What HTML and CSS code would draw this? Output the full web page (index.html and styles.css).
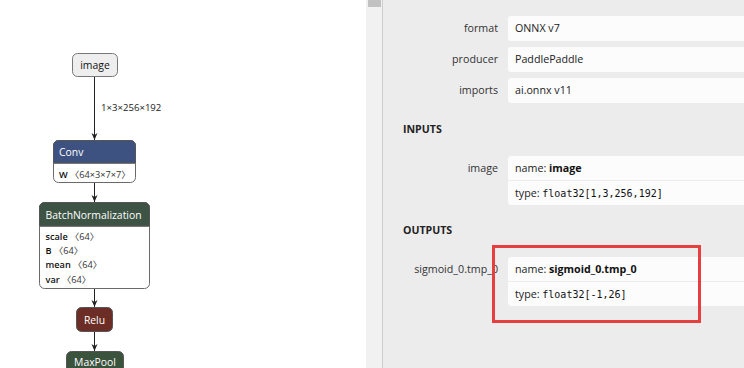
FILE: index.html
```html
<!DOCTYPE html>
<html>
<head>
<meta charset="utf-8">
<link rel="stylesheet" href="styles.css">
</head>
<body>
<div class="app">
  <div class="canvas">
    <svg class="graph" width="366" height="368" viewBox="0 0 366 368">
      <defs>
        <marker id="arrow" markerWidth="8" markerHeight="8" refX="7" refY="4" orient="auto" markerUnits="userSpaceOnUse">
          <path d="M0,1 L7,4 L0,7 L2,4 Z" fill="#222"/>
        </marker>
      </defs>
      <g class="edges">
        <line x1="94.5" y1="77" x2="94.5" y2="140" marker-end="url(#arrow)"/>
        <line x1="94.5" y1="183" x2="94.5" y2="202" marker-end="url(#arrow)"/>
        <line x1="94.5" y1="289" x2="94.5" y2="307" marker-end="url(#arrow)"/>
        <line x1="94.5" y1="332" x2="94.5" y2="351" marker-end="url(#arrow)"/>
      </g>
      <text class="edge-label" x="101" y="111">1×3×256×192</text>

      <g class="node">
        <rect class="input-node" x="72.5" y="53.5" width="45" height="23" rx="5"/>
        <text class="dark" x="95" y="69" text-anchor="middle">image</text>
      </g>

      <g class="node">
        <rect class="body" x="53.5" y="140.5" width="82" height="42" rx="5"/>
        <path class="conv" d="M53.5,163 V145.5 a5,5 0 0 1 5,-5 H130.5 a5,5 0 0 1 5,5 V163 Z"/>
        <line class="sep" x1="53.5" y1="163.5" x2="135.5" y2="163.5"/>
        <text class="light" x="59" y="156">Conv</text>
        <text class="attr" x="59" y="178"><tspan class="b">W</tspan> 〈64×3×7×7〉</text>
      </g>

      <g class="node">
        <rect class="body" x="39.5" y="202.5" width="110" height="86" rx="5"/>
        <path class="norm" d="M39.5,226 V207.5 a5,5 0 0 1 5,-5 H144.5 a5,5 0 0 1 5,5 V226 Z"/>
        <line class="sep" x1="39.5" y1="226.5" x2="149.5" y2="226.5"/>
        <text class="light" x="45.5" y="219">BatchNormalization</text>
        <text class="attr" x="45.5" y="240"><tspan class="b">scale</tspan> 〈64〉</text>
        <text class="attr" x="45.5" y="254"><tspan class="b">B</tspan> 〈64〉</text>
        <text class="attr" x="45.5" y="268"><tspan class="b">mean</tspan> 〈64〉</text>
        <text class="attr" x="45.5" y="283"><tspan class="b">var</tspan> 〈64〉</text>
      </g>

      <g class="node">
        <rect class="act" x="76.5" y="307.5" width="36" height="24" rx="5"/>
        <text class="light" x="94.5" y="323.5" text-anchor="middle">Relu</text>
      </g>

      <g class="node">
        <rect class="pool" x="66.5" y="351.5" width="57" height="30" rx="5"/>
        <text class="light" x="95" y="366" text-anchor="middle">MaxPool</text>
      </g>
    </svg>
  </div>

  <div class="sidebar">
    <div class="scrollbar"><div class="thumb"></div></div>
    <div class="content">
      <div class="rows">
        <div class="row"><div class="label">format</div><div class="value">ONNX v7</div></div>
        <div class="row"><div class="label">producer</div><div class="value">PaddlePaddle</div></div>
        <div class="row"><div class="label">imports</div><div class="value">ai.onnx v11</div></div>
      </div>

      <div class="header">INPUTS</div>
      <div class="row">
        <div class="label">image</div>
        <div class="value multi">
          <div class="line">name: <b>image</b></div>
          <div class="line">type: <code>float32[1,3,256,192]</code></div>
        </div>
      </div>

      <div class="header">OUTPUTS</div>
      <div class="row">
        <div class="label">sigmoid_0.tmp_0</div>
        <div class="value multi">
          <div class="line">name: <b>sigmoid_0.tmp_0</b></div>
          <div class="line">type: <code>float32[-1,26]</code></div>
        </div>
      </div>
    </div>
    <div class="highlight"></div>
  </div>
</div>
</body>
</html>
```

FILE: styles.css
```css
* { box-sizing: border-box; }
html, body { margin: 0; padding: 0; }
body {
  width: 744px;
  height: 368px;
  overflow: hidden;
  font-family: "Open Sans", "Noto Sans", sans-serif;
  background: #fff;
}
.app {
  display: flex;
  width: 744px;
  height: 368px;
}
.canvas {
  width: 366px;
  height: 368px;
  background: #fff;
  flex: none;
}
.graph { display: block; }
.edges line { stroke: #222; stroke-width: 1; }
.edge-label {
  font-family: "Open Sans", sans-serif;
  font-size: 9.6px;
  fill: #222;
}
.node text {
  font-family: "Open Sans", "Noto Sans CJK SC", sans-serif;
  font-size: 10.4px;
}
.node .dark { fill: #111; }
.node .light { fill: #fff; }
.input-node { fill: #eeeeee; stroke: #777; stroke-width: 1; }
.body { fill: #fff; stroke: #6a6a6a; stroke-width: 1; }
.conv { fill: #3e5282; stroke: #555; stroke-width: 1; }
.norm { fill: #3d5444; stroke: #555; stroke-width: 1; }
.act { fill: #6b2d25; stroke: #555; stroke-width: 1; }
.pool { fill: #3b523d; stroke: #555; stroke-width: 1; }
.sep { stroke: #777; stroke-width: 1; }
.node .attr { font-size: 9.2px; fill: #333; }
.node .attr .b { font-weight: 600; fill: #111; }

.sidebar {
  position: relative;
  flex: 1;
  display: flex;
  background: #ececec;
  overflow: hidden;
}
.scrollbar {
  width: 17px;
  flex: none;
  background: #f1f1f1;
  border-right: 1px solid #cdcdcd;
  padding-left: 2px;
}
.thumb {
  width: 13px;
  height: 7px;
  background: #c1c1c1;
}
.content {
  flex: 1;
  padding: 16px 0 0 20px;
  font-size: 10.7px;
  color: #333;
  margin-right: -10px;
}
.rows {
  display: flex;
  flex-direction: column;
  gap: 6px;
}
.row {
  display: flex;
  align-items: flex-start;
}
.label {
  width: 95px;
  flex: none;
  text-align: right;
  height: 25px;
  line-height: 25px;
  white-space: nowrap;
  color: #333;
}
.value {
  flex: 1;
  margin-left: 10px;
  background: #fcfcfc;
  border-radius: 3px;
  height: 25px;
  line-height: 25px;
  padding-left: 7px;
  color: #222;
}
.value.multi {
  height: auto;
  padding-left: 0;
}
.line {
  height: 24px;
  line-height: 24px;
  padding-left: 7px;
}
.line + .line {
  height: 25px;
  border-top: 1px solid #ececec;
}
.line b { font-weight: 700; color: #111; }
code {
  font-family: "DejaVu Sans Mono", monospace;
  font-size: 10px;
  color: #111;
}
.header {
  font-weight: 700;
  font-size: 10.6px;
  color: #222;
  height: 20px;
  line-height: 20px;
  margin: 16px 0 17px 0;
}
.row + .header { margin-top: 15px; }
.highlight {
  position: absolute;
  left: 126px;
  top: 245px;
  width: 209px;
  height: 78px;
  border: 3px solid #e5403f;
  pointer-events: none;
}
```
